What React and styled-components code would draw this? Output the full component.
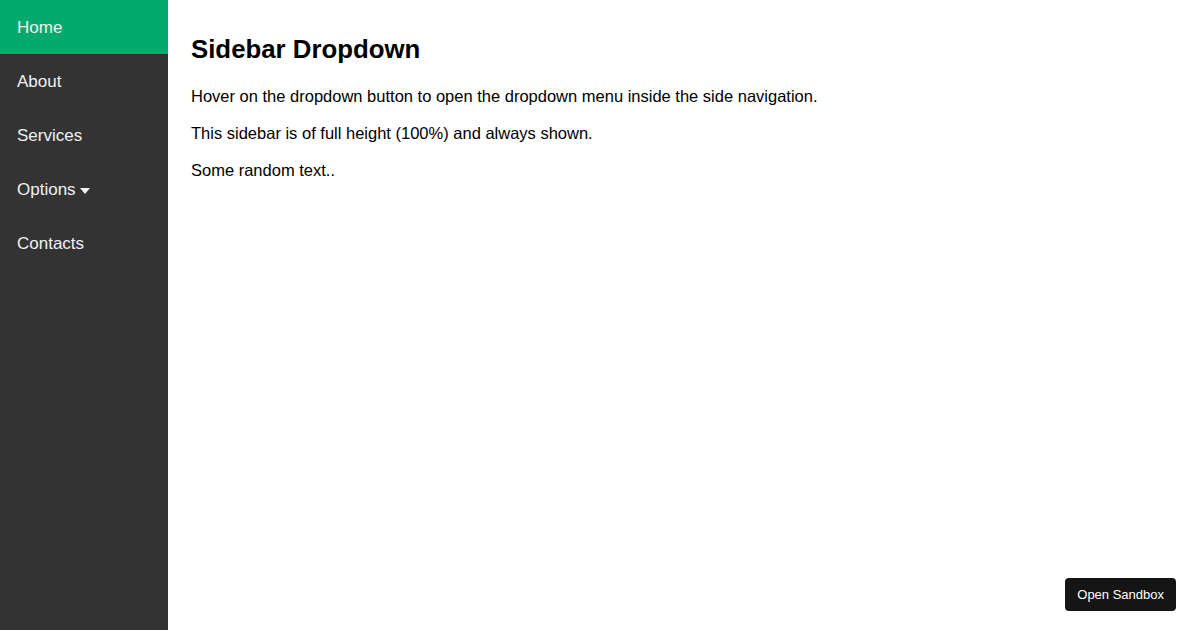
import React from 'react';
import styled, { createGlobalStyle } from 'styled-components';

const Global = createGlobalStyle`
  html, body {
    margin: 0;
    padding: 0;
    height: 100%;
    font-family: "Liberation Sans", Arial, sans-serif;
  }
  #root {
    height: 100%;
  }
`;

const Page = styled.div`
  display: flex;
  height: 630px;
`;

const Sidenav = styled.nav`
  width: 168px;
  flex-shrink: 0;
  background: #333;
  display: flex;
  flex-direction: column;
`;

const NavLink = styled.a`
  display: flex;
  align-items: center;
  gap: 4px;
  height: 54px;
  padding: 2px 17px 0;
  box-sizing: border-box;
  font-size: 17px;
  color: #f1f1f1;
  text-decoration: none;
  background: ${(p) => (p.$active ? '#04aa6d' : 'transparent')};
`;

const Caret = styled.span`
  width: 0;
  height: 0;
  border-left: 5.5px solid transparent;
  border-right: 5.5px solid transparent;
  border-top: 6px solid #f1f1f1;
  margin-top: 1px;
`;

const Main = styled.main`
  flex: 1;
  padding: 0 23px;
  color: #000;
`;

const Title = styled.h2`
  font-size: 25.8px;
  font-weight: bold;
  margin: 35px 0 22px;
`;

const Text = styled.p`
  font-size: 16.5px;
  margin: 0 0 16px;
  line-height: 21px;
`;

const SandboxButton = styled.button`
  position: fixed;
  right: 24px;
  bottom: 19px;
  height: 33px;
  padding: 0 12px;
  border: none;
  border-radius: 4px;
  background: #151515;
  color: #fff;
  font-family: "Liberation Sans", Arial, sans-serif;
  font-size: 13px;
`;

const links = ['Home', 'About', 'Services', 'Options', 'Contacts'];

export default function App() {
  return (
    <>
      <Global />
      <Page>
        <Sidenav>
          {links.map((name, i) => (
            <NavLink key={name} href="#" $active={i === 0}>
              {name}
              {name === 'Options' && <Caret />}
            </NavLink>
          ))}
        </Sidenav>
        <Main>
          <Title>Sidebar Dropdown</Title>
          <Text>Hover on the dropdown button to open the dropdown menu inside the side navigation.</Text>
          <Text>This sidebar is of full height (100%) and always shown.</Text>
          <Text>Some random text..</Text>
        </Main>
      </Page>
      <SandboxButton>Open Sandbox</SandboxButton>
    </>
  );
}
